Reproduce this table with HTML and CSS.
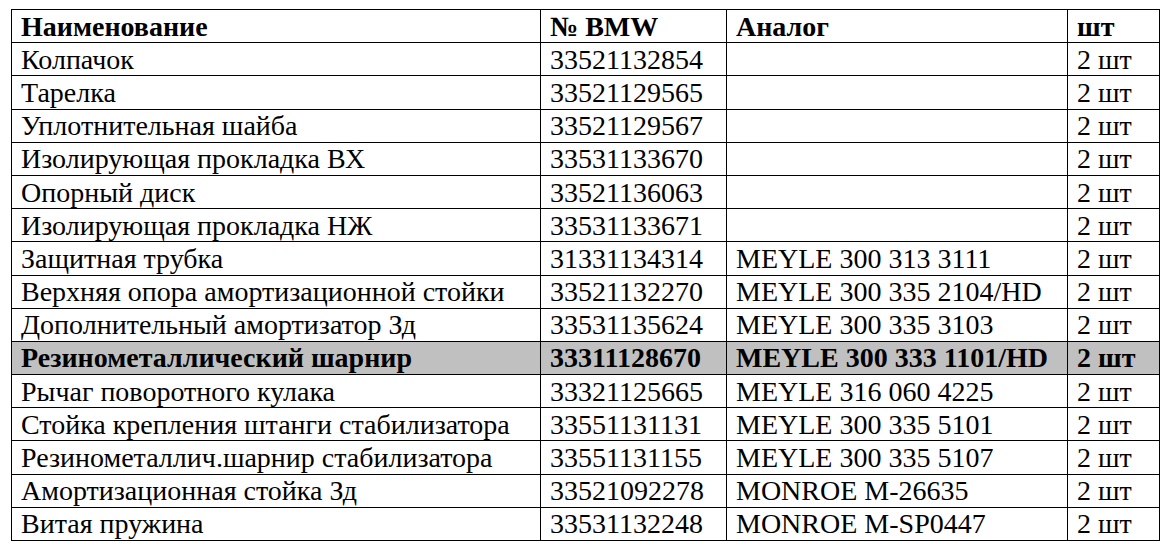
FILE: index.html
```html
<!DOCTYPE html>
<html lang="ru">
<head>
<meta charset="utf-8">
<link rel="stylesheet" href="styles.css">
</head>
<body>
<table class="parts">
  <colgroup>
    <col class="c-name"><col class="c-bmw"><col class="c-analog"><col class="c-qty">
  </colgroup>
  <tr class="head"><td>Наименование</td><td>№ BMW</td><td>Аналог</td><td>шт</td></tr>
  <tr><td>Колпачок</td><td>33521132854</td><td></td><td>2 шт</td></tr>
  <tr><td>Тарелка</td><td>33521129565</td><td></td><td>2 шт</td></tr>
  <tr><td>Уплотнительная шайба</td><td>33521129567</td><td></td><td>2 шт</td></tr>
  <tr><td>Изолирующая прокладка ВХ</td><td>33531133670</td><td></td><td>2 шт</td></tr>
  <tr><td>Опорный диск</td><td>33521136063</td><td></td><td>2 шт</td></tr>
  <tr><td>Изолирующая прокладка НЖ</td><td>33531133671</td><td></td><td>2 шт</td></tr>
  <tr><td>Защитная трубка</td><td>31331134314</td><td>MEYLE 300 313 3111</td><td>2 шт</td></tr>
  <tr><td>Верхняя опора амортизационной стойки</td><td>33521132270</td><td>MEYLE 300 335 2104/HD</td><td>2 шт</td></tr>
  <tr><td>Дополнительный амортизатор Зд</td><td>33531135624</td><td>MEYLE 300 335 3103</td><td>2 шт</td></tr>
  <tr class="hl"><td>Резинометаллический шарнир</td><td>33311128670</td><td>MEYLE 300 333 1101/HD</td><td>2 шт</td></tr>
  <tr><td>Рычаг поворотного кулака</td><td>33321125665</td><td>MEYLE 316 060 4225</td><td>2 шт</td></tr>
  <tr><td>Стойка крепления штанги стабилизатора</td><td>33551131131</td><td>MEYLE 300 335 5101</td><td>2 шт</td></tr>
  <tr><td>Резинометаллич.шарнир стабилизатора</td><td>33551131155</td><td>MEYLE 300 335 5107</td><td>2 шт</td></tr>
  <tr><td>Амортизационная стойка Зд</td><td>33521092278</td><td>MONROE M-26635</td><td>2 шт</td></tr>
  <tr><td>Витая пружина</td><td>33531132248</td><td>MONROE M-SP0447</td><td>2 шт</td></tr>
</table>
</body>
</html>
```
FILE: styles.css
```css
html, body {
  margin: 0;
  padding: 0;
  background: #ffffff;
}
body {
  padding: 9px 0 0 11px;
  font-family: "Liberation Serif", "Times New Roman", serif;
  color: #000;
}
.parts {
  border-collapse: collapse;
  table-layout: fixed;
  width: 1148px;
  font-size: 28px;
}
.c-name { width: 529px; }
.c-bmw { width: 186px; }
.c-analog { width: 341px; }
.c-qty { width: 92px; }
.parts tr { height: 33.2px; }
.parts td {
  border: 1px solid #000;
  padding: 0 0 0 9px;
  white-space: nowrap;
  overflow: hidden;
  line-height: 31px;
  vertical-align: middle;
}
.head td, .hl td { font-weight: bold; }
.hl td { background: #c0c0c0; }
```
